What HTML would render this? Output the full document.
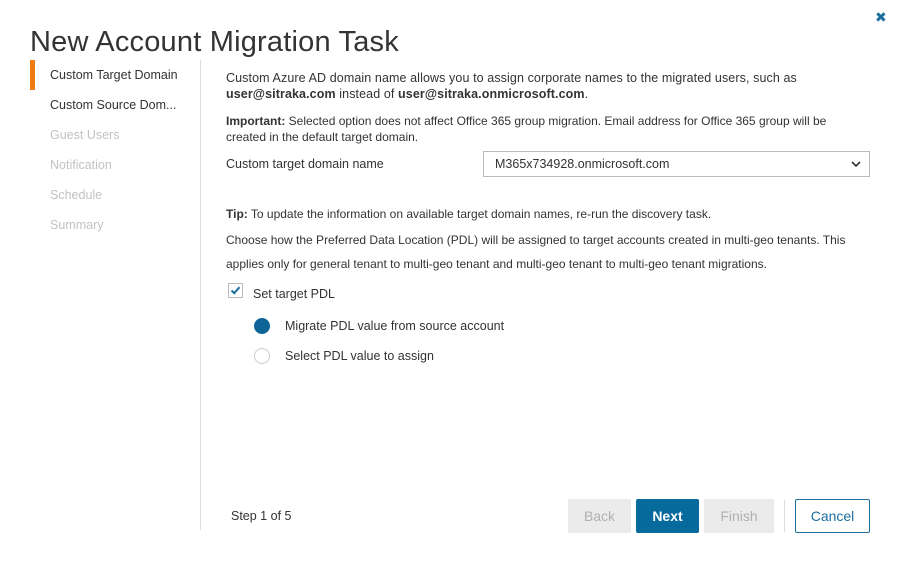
<!DOCTYPE html>
<html><head><meta charset="utf-8"><style>
*{margin:0;padding:0;box-sizing:border-box}
body{width:900px;height:563px;background:#fff;font-family:"Liberation Sans","DejaVu Sans",sans-serif;color:#333;position:relative;overflow:hidden;font-size:12.5px}
.a{position:absolute;white-space:nowrap}
h1{position:absolute;left:30px;top:26px;font-size:29px;font-weight:normal;color:#333;letter-spacing:0.2px}
.nav{position:absolute;left:50px;font-size:12.5px}
.dis{color:#c2c2c2}
b{font-weight:bold}
.btn{position:absolute;top:499px;height:34px;border-radius:2px;font-size:14px;text-align:center;line-height:34px}
</style></head><body>
<div class="a" style="left:875px;top:9px;font-size:14px;color:#1d6fa0;font-weight:bold">✖</div>
<h1>New Account Migration Task</h1>
<div class="a" style="left:30px;top:60px;width:5px;height:30px;background:#f07b11"></div>
<div class="a" style="left:200px;top:60px;width:1px;height:470px;background:#ddd"></div>
<div class="nav a" style="top:68px">Custom Target Domain</div>
<div class="nav a" style="top:98px">Custom Source Dom...</div>
<div class="nav a dis" style="top:128px">Guest Users</div>
<div class="nav a dis" style="top:158px">Notification</div>
<div class="nav a dis" style="top:188px">Schedule</div>
<div class="nav a dis" style="top:218px">Summary</div>
<div class="a" style="left:226px;top:70px;line-height:16px;letter-spacing:0.1px">Custom Azure AD domain name allows you to assign corporate names to the migrated users, such as<br><b>user@sitraka.com</b> instead of <b>user@sitraka.onmicrosoft.com</b>.</div>
<div class="a" style="left:226px;top:113px;line-height:16px;font-size:12px">
<b>Important:</b> Selected option does not affect Office 365 group migration. Email address for Office 365 group will be<br>created in the default target domain.</div>
<div class="a" style="left:226px;top:157px">Custom target domain name</div>
<div class="a" style="left:483px;top:151px;width:387px;height:26px;border:1px solid #bbb;padding:5px 0 0 11px">M365x734928.onmicrosoft.com
<svg style="position:absolute;right:8px;top:9px" width="10" height="7" viewBox="0 0 10 7"><path d="M1 1l4 4 4-4" fill="none" stroke="#333" stroke-width="1.6"/></svg></div>
<div class="a" style="left:226px;top:207px;font-size:12px"><b>Tip:</b> To update the information on available target domain names, re-run the discovery task.</div>
<div class="a" style="left:226px;top:228px;line-height:24px;font-size:12px">Choose how the Preferred Data Location (PDL) will be assigned to target accounts created in multi-geo tenants. This<br>applies only for general tenant to multi-geo tenant and multi-geo tenant to multi-geo tenant migrations.</div>
<div class="a" style="left:228px;top:283px;width:15px;height:15px;border:1px solid #bbb"><svg width="13" height="13" viewBox="0 0 13 13"><path d="M2.5 6.5l2.7 2.7 5.3-6" fill="none" stroke="#1d6fa0" stroke-width="2"/></svg></div>
<div class="a" style="left:253px;top:287px">Set target PDL</div>
<div class="a" style="left:254px;top:318px;width:16px;height:16px;border-radius:50%;background:#0d6496"></div>
<div class="a" style="left:285px;top:319px">Migrate PDL value from source account</div>
<div class="a" style="left:254px;top:348px;width:16px;height:16px;border-radius:50%;border:1px solid #ccc"></div>
<div class="a" style="left:285px;top:349px">Select PDL value to assign</div>
<div class="a" style="left:231px;top:509px">Step 1 of 5</div>
<div class="btn" style="left:568px;width:63px;background:#ebebeb;color:#b0b0b0">Back</div>
<div class="btn" style="left:636px;width:63px;background:#066a9c;color:#fff;font-weight:bold">Next</div>
<div class="btn" style="left:704px;width:70px;background:#ebebeb;color:#b0b0b0">Finish</div>
<div class="a" style="left:784px;top:500px;width:1px;height:32px;background:#ddd"></div>
<div class="btn" style="left:795px;width:75px;border:1px solid #1d6fa0;color:#1d6fa0;line-height:32px">Cancel</div>
</body></html>
